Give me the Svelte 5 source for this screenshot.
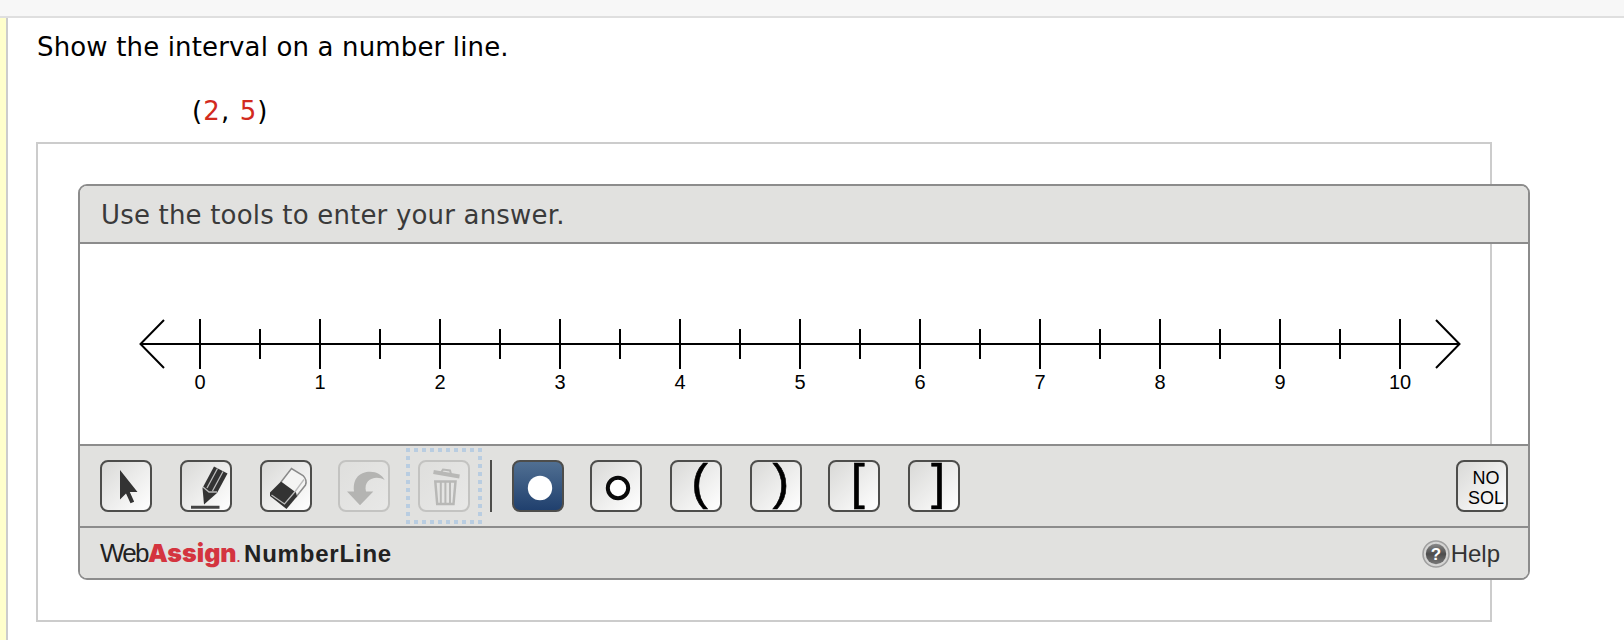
<script lang="ts">
	type Tool = {
		id: string;
		label: string;
		symbol?: string;
		symbolX?: number;
	};

	const editTools: Tool[] = [
		{ id: 'select', label: 'Select' },
		{ id: 'draw', label: 'Draw' },
		{ id: 'erase', label: 'Erase' },
		{ id: 'undo', label: 'Undo' },
		{ id: 'clear', label: 'Clear all' }
	];

	const pointTools: Tool[] = [
		{ id: 'closed', label: 'Closed point' },
		{ id: 'open', label: 'Open point' },
		{ id: 'lparen', label: 'Left parenthesis', symbol: '(', symbolX: 19.2 },
		{ id: 'rparen', label: 'Right parenthesis', symbol: ')', symbolX: 20.6 },
		{ id: 'lbracket', label: 'Left bracket', symbol: '[', symbolX: 20.8 },
		{ id: 'rbracket', label: 'Right bracket', symbol: ']', symbolX: 21.2 }
	];

	const disabled = ['undo', 'clear'];
	let active = $state('closed');

	// One unit on the line is 120px, with a minor tick at each half
	const unit = 120;
	const origin = 120;
	const axisY = 100;
	const ticks = Array.from({ length: 21 }, (_, i) => i / 2);
</script>

<div class="page">
	<div class="topbar"></div>
	<div class="content">
		<p class="question">Show the interval on a number line.</p>
		<p class="interval">(<span>2</span>, <span>5</span>)</p>

		<div class="answer">
			<div class="widget">
				<div class="prompt">Use the tools to enter your answer.</div>

				<svg class="line" width="1448" height="200" viewBox="0 0 1448 200">
					<path d="M60 100H1380M84 76L60.5 100L84 124M1356 76L1379.5 100L1356 124" />
					{#each ticks as t}
						{@const x = origin + t * unit}
						{@const half = Number.isInteger(t) ? 25 : 15}
						<line x1={x} x2={x} y1={axisY - half} y2={axisY + half} />
						{#if Number.isInteger(t)}
							<text {x} y="145">{t}</text>
						{/if}
					{/each}
				</svg>

				<div class="toolbar">
					<div class="group">
						{#each editTools as tool (tool.id)}
							<div class="slot" class:focused={tool.id === 'clear'}>
								<button class="tool" aria-label={tool.label} disabled={disabled.includes(tool.id)}>
									<svg width="48" height="48" viewBox="0 0 48 48">
										{#if tool.id === 'select'}
											<path fill="#333" d="M18 8V37.5L24 31.5L28.5 41.3L32.2 39.8L27.8 30H35.5Z" />
										{:else if tool.id === 'draw'}
											<path fill="#333" d="M32 4.5L45.5 11.5L35 31L22 42.5L20.5 26Z" />
											<path class="detail" d="M21 25L27 30L35 30M35.5 6.5L25 26M41 9.5L30.5 29" />
											<path stroke="#444" stroke-width="3" d="M9 45.2H37.5" />
										{:else if tool.id === 'erase'}
											<path fill="#f4f4f3" stroke="#8a8a8a" stroke-width="1.5" d="M19 20L29.5 6.5L41 13.5Q45.5 18 43.5 23L34 35" />
											<path fill="#333" d="M19 19.5L34 30.5L35 34.5L24.5 47L8 34V30.5Z" />
											<path class="detail" d="M9.5 33L22.5 42L33.5 29L42 17.5" />
										{:else if tool.id === 'undo'}
											<path fill="#b4b4b2" d="M7 29.5H14C12.5 16 20 10 30 9.8C37 9.8 42 13 44.7 18C36 12.5 23 17 26 29.5H33.3L20 43.3Z" />
										{:else}
											<g fill="none" stroke="#b8b8b6">
												<path stroke-width="4" d="M13.5 10L39.5 14.5" />
												<path stroke-width="2" d="M21 10.5L23 7.5L30 8.5L31 12" />
												<path stroke-width="2.5" d="M15.3 19.5H35.5L33.5 42H17.2Z" />
												<path stroke-width="2" d="M20.8 19V42M25.4 19V42M30 19V42" />
											</g>
										{/if}
									</svg>
								</button>
							</div>
						{/each}
					</div>
					<div class="divider"></div>
					<div class="group points">
						{#each pointTools as tool (tool.id)}
							<button
								class="tool"
								class:active={active === tool.id}
								aria-label={tool.label}
								onclick={() => (active = tool.id)}
							>
								<svg width="48" height="48" viewBox="0 0 48 48">
									{#if tool.id === 'closed'}
										<circle cx="26" cy="26" r="12.2" fill="#fff" />
									{:else if tool.id === 'open'}
										<circle cx="26" cy="26" r="10.2" fill="#fff" stroke="#0a0a0a" stroke-width="4" />
									{:else}
										<text class="symbol" x={tool.symbolX} y="37.3">{tool.symbol}</text>
									{/if}
								</svg>
							</button>
						{/each}
					</div>
					<button class="tool nosol"><span>NO</span><span>SOL</span></button>
				</div>

				<div class="footer">
					<div class="brand">
						<span class="web">Web</span><span class="assign">Assign</span><span class="dot">.</span>
						<span class="name">NumberLine</span>
					</div>
					<div class="help">
						<svg width="28" height="28" viewBox="0 0 28 28">
							<defs>
								<linearGradient id="helpFill" x1="0" y1="0" x2="0" y2="1">
									<stop offset="0" stop-color="#8a8a8a" />
									<stop offset="0.5" stop-color="#4d4d4d" />
									<stop offset="1" stop-color="#777" />
								</linearGradient>
							</defs>
							<circle cx="14" cy="14" r="13" fill="#d5d5d4" stroke="#a0a0a0" stroke-width="1.6" />
							<circle cx="14" cy="14" r="10.2" fill="url(#helpFill)" />
							<text x="14" y="20">?</text>
						</svg>
						<span>Help</span>
					</div>
				</div>
			</div>
		</div>
	</div>
</div>

<style>
	:global(body) {
		background: #fff;
	}

	.page {
		height: 640px;
		display: flex;
		flex-direction: column;
		overflow: hidden;
		font-family: Verdana, 'DejaVu Sans', sans-serif;
		font-size: 26px;
	}

	.topbar {
		height: 16px;
		flex-shrink: 0;
		background: #f7f7f7;
		border-bottom: 2px solid #dfdfdf;
	}

	.content {
		flex: 1;
		box-sizing: border-box;
		border-left: 6px solid #ffffcc;
		box-shadow: inset 2px 0 #ccc;
		padding: 13px 0 0 30px;
	}

	p {
		margin: 0;
		line-height: 32px;
		color: #000;
	}

	.question {
		padding-left: 1px;
		letter-spacing: 0.15px;
	}

	.interval {
		margin: 32px 0 0 156px;
		letter-spacing: 1.1px;
	}

	.interval span {
		color: #d22a1e;
	}

	.answer {
		box-sizing: border-box;
		width: 1456px;
		height: 480px;
		margin-top: 15px;
		padding: 40px;
		border: 2px solid #ccc;
	}

	/* The widget keeps its own width and runs past the answer box */
	.widget {
		box-sizing: border-box;
		width: 1452px;
		height: 396px;
		border: 2px solid #8c8c8c;
		border-radius: 9px;
		overflow: hidden;
	}

	.prompt {
		box-sizing: border-box;
		height: 58px;
		line-height: 56px;
		padding: 1px 0 0 21px;
		letter-spacing: 0.18px;
		color: #3a3a3a;
		background: #e1e1df;
		border-bottom: 2px solid #8c8c8c;
	}

	.line {
		display: block;
	}

	.line path,
	.line line {
		fill: none;
		stroke: #000;
		stroke-width: 2;
	}

	.line text {
		font: 20px Arial, 'Liberation Sans', sans-serif;
		text-anchor: middle;
	}

	.toolbar {
		display: flex;
		align-items: center;
		box-sizing: border-box;
		height: 84px;
		padding: 0 20px 0 8px;
		background: #e1e1df;
		border-top: 2px solid #8c8c8c;
		border-bottom: 2px solid #8c8c8c;
	}

	.group {
		display: flex;
	}

	.slot {
		box-sizing: border-box;
		width: 76px;
		height: 76px;
		padding: 12px;
		margin-right: 4px;
	}

	.slot:nth-child(3) {
		margin-right: 2px;
	}

	/* Square dots, which a dotted border would round off */
	.slot.focused {
		background:
			repeating-linear-gradient(90deg, #b9cde1 0 4px, transparent 4px 8px) top / 100% 4px no-repeat,
			repeating-linear-gradient(90deg, #b9cde1 0 4px, transparent 4px 8px) bottom / 100% 4px no-repeat,
			repeating-linear-gradient(#b9cde1 0 4px, transparent 4px 8px) left / 4px 100% no-repeat,
			repeating-linear-gradient(#b9cde1 0 4px, transparent 4px 8px) right / 4px 100% no-repeat;
	}

	.tool {
		display: block;
		box-sizing: border-box;
		width: 52px;
		height: 52px;
		padding: 0;
		overflow: hidden;
		border: 2px solid #4d4d4b;
		border-radius: 8px;
		background: linear-gradient(135deg, #d9d9d7, #fff);
	}

	.tool svg {
		display: block;
		fill: none;
	}

	.tool:disabled {
		border-color: #c3c3c1;
		background: linear-gradient(135deg, #dfdfdd, #e8e8e7);
	}

	.tool.active {
		background: linear-gradient(#506f92, #20406e);
	}

	.detail {
		stroke: #bbb;
		stroke-width: 1.3;
	}

	.symbol {
		font: 50px Arial, 'Liberation Sans', sans-serif;
		fill: #000;
		stroke: #000;
		stroke-width: 0.6;
	}

	.divider {
		width: 2px;
		height: 52px;
		margin: 0 20px 0 4px;
		background: #4d4d4b;
	}

	.points {
		gap: 28px;
	}

	.points .tool:nth-child(1),
	.points .tool:nth-child(4) {
		margin-right: -2px;
	}

	.nosol {
		display: flex;
		flex-direction: column;
		align-items: center;
		justify-content: center;
		margin-left: auto;
		padding: 4px 0 0 8px;
		font: 18px/20px Arial, 'Liberation Sans', sans-serif;
		color: #000;
	}

	.footer {
		display: flex;
		align-items: center;
		justify-content: space-between;
		height: 50px;
		padding: 0 28px 0 20px;
		background: #e1e1df;
		font-family: Arial, 'Liberation Sans', sans-serif;
	}

	.brand {
		display: flex;
		align-items: baseline;
		color: #222;
	}

	.web {
		width: 48px;
		font: 300 26px 'Liberation Sans', sans-serif;
		letter-spacing: -1.8px;
	}

	.assign {
		width: 88px;
		font: 900 25px Inter, sans-serif;
		letter-spacing: 0;
		color: #d4343f;
	}

	.dot {
		width: 8px;
		color: #d4343f;
		font-size: 18px;
	}

	.name {
		font-size: 24px;
		font-weight: bold;
		letter-spacing: 0.8px;
	}

	.help {
		display: flex;
		align-items: center;
		gap: 1px;
		padding-top: 2px;
		font-size: 24px;
		color: #333;
	}

	.help text {
		font: bold 17px Arial, 'Liberation Sans', sans-serif;
		text-anchor: middle;
		fill: #fff;
	}
</style>
